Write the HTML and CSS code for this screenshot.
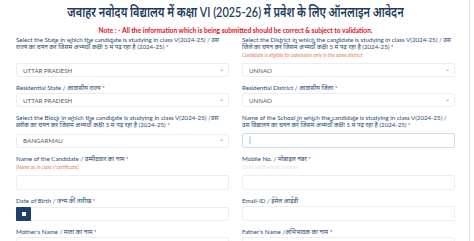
FILE: index.html
```html
<!DOCTYPE html>
<html lang="hi">
<head>
<meta charset="utf-8">
<title>JNV Class VI Admission</title>
<link rel="stylesheet" href="styles.css">
</head>
<body>
<div class="page">
  <h1 class="title">जवाहर नवोदय विद्यालय में कक्षा VI (2025-26) में प्रवेश के लिए ऑनलाइन आवेदन</h1>
  <p class="note">Note : - All the information which is being submitted should be correct &amp; subject to validation.</p>
  <div class="form">
    <div class="field">
      <label class="label">Select the State in which the candidate is studying in class V(2024-25) / उस राज्य का चयन करें जिसमें अभ्यर्थी कक्षा 5 में पढ़ रहा है (2024-25) <span class="req">*</span></label>
      <div class="select"><span>UTTAR PRADESH</span><span class="chev">&#8964;</span></div>
    </div>
    <div class="field">
      <label class="label">Select the District in which the candidate is studying in class V(2024-25) / उस जिले का चयन करें जिसमें अभ्यर्थी कक्षा 5 में पढ़ रहा है (2024-25) <span class="req">*</span></label>
      <span class="hint">Candidate is eligible for admission only in the same district</span>
      <div class="select"><span>UNNAO</span><span class="chev">&#8964;</span></div>
    </div>

    <div class="field">
      <label class="label">Residential State / आवासीय राज्य <span class="req">*</span></label>
      <div class="select"><span>UTTAR PRADESH</span><span class="chev">&#8964;</span></div>
    </div>
    <div class="field">
      <label class="label">Residential District / आवासीय जिला <span class="req">*</span></label>
      <div class="select"><span>UNNAO</span><span class="chev">&#8964;</span></div>
    </div>

    <div class="field">
      <label class="label">Select the Block in which the candidate is studying in class V(2024-25) /उस ब्लॉक का चयन करें जिसमें अभ्यर्थी कक्षा 5 में पढ़ रहा है (2024-25) <span class="req">*</span></label>
      <div class="select"><span>BANGARMAU</span><span class="chev">&#8964;</span></div>
    </div>
    <div class="field">
      <label class="label">Name of the School in which the candidate is studying in class V(2024-25) / उस विद्यालय का चयन करें जिसमें अभ्यर्थी कक्षा 5 में पढ़ रहा है (2024-25) <span class="req">*</span></label>
      <div class="input focus"><span class="caret">|</span></div>
    </div>

    <div class="field">
      <label class="label">Name of the Candidate / उम्मीदवार का नाम <span class="req">*</span></label>
      <span class="hint">(Name as in class V certificate)</span>
      <div class="input"></div>
    </div>
    <div class="field">
      <label class="label">Mobile No. / मोबाइल नंबर <span class="req">*</span></label>
      <span class="hint faint">(Enter valid mobile number)</span>
      <div class="input"></div>
    </div>

    <div class="field">
      <label class="label">Date of Birth / जन्म की तारीख <span class="req">*</span></label>
      <div class="input date"><span class="cal"><span class="cal-dot"></span></span></div>
    </div>
    <div class="field">
      <label class="label">Email-ID / ईमेल आईडी</label>
      <div class="input"></div>
    </div>

    <div class="field">
      <label class="label">Mother's Name / माता का नाम <span class="req">*</span></label>
      <div class="input"></div>
    </div>
    <div class="field">
      <label class="label">Father's Name /अभिभावक का नाम <span class="req">*</span></label>
      <div class="input"></div>
    </div>
  </div>
</div>
</body>
</html>
```

FILE: styles.css
```css
html, body {
  margin: 0;
  padding: 0;
  background: #ffffff;
}
body {
  font-family: Lato, "Noto Sans", "Liberation Sans", sans-serif;
  overflow: hidden;
}
.page {
  width: 470px;
  height: 241px;
  overflow: hidden;
  box-sizing: border-box;
  border-right: 1px solid #e4e8ee;
  padding: 0 14px 0 16px;
}
.title {
  margin: 0;
  height: 24px;
  line-height: 24px;
  font-size: 14px;
  font-weight: 600;
  text-align: center;
  color: #1e3b5c;
  white-space: nowrap;
  transform: scaleX(0.78);
  transform-origin: 50% 50%;
}
.note {
  margin: 0;
  height: 12px;
  line-height: 12px;
  font-size: 6.6px;
  font-weight: 700;
  text-align: center;
  color: #e3101c;
  white-space: nowrap;
}
.form {
  display: grid;
  grid-template-columns: 1fr 1fr;
  column-gap: 13px;
  row-gap: 7px;
}
.field {
  display: flex;
  flex-direction: column;
  min-width: 0;
}
.label {
  display: block;
  font-size: 6.2px;
  line-height: 7px;
  color: #2a4a72;
  margin-bottom: 2px;
}
.req {
  color: #e3101c;
}
.hint {
  font-size: 5px;
  line-height: 7px;
  font-style: italic;
  color: #f27a55;
  margin-top: 0;
  margin-bottom: 4px;
}
.hint.faint {
  color: #e6e8ec;
}
.select, .input {
  margin-top: auto;
  height: 14px;
  box-sizing: border-box;
  border: 1px solid #eceef2;
  border-radius: 2px;
  background: #ffffff;
  display: flex;
  align-items: center;
  padding: 0 4px 0 6px;
  flex-shrink: 0;
}
.select {
  justify-content: space-between;
  font-size: 6.2px;
  color: #555d66;
}
.chev {
  font-size: 6px;
  color: #7d848c;
  line-height: 6px;
  margin-top: -3px;
}
.input {
  height: 15px;
}
.input.focus {
  border-color: #c9dcf0;
  margin-top: 2.5px;
}
.caret {
  font-size: 7px;
  color: #6b7480;
}
.input.date {
  padding-left: 0;
  height: 14px;
}
.cal {
  width: 15px;
  height: 14px;
  margin-left: -1px;
  background: #1d3f70;
  border-radius: 1px;
  display: flex;
  align-items: center;
  justify-content: center;
}
.cal-dot {
  width: 4px;
  height: 4px;
  background: #ffffff;
}
```
